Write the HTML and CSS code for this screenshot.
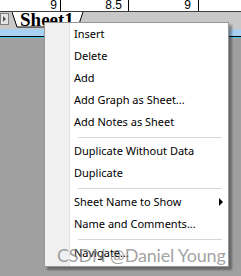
FILE: index.html
```html
<!DOCTYPE html>
<html lang="en">
<head>
<meta charset="UTF-8">
<title>Sheet Menu</title>
<link rel="stylesheet" href="styles.css">
</head>
<body>

<div class="sheet">
  <div class="cells">
    <div class="cell c1">9</div>
    <div class="cell c2">8.5</div>
    <div class="cell c3">9</div>
    <div class="cell c4"></div>
  </div>
  <div class="tabbar">
    <div class="scroll-btn">
      <svg width="5" height="6" viewBox="0 0 5 6"><path d="M1 0 L4 3 L1 6 Z" fill="#555"/></svg>
    </div>
    <div class="tab">
      <svg class="tab-shape" width="76" height="16" viewBox="0 0 76 16">
        <path d="M0 0 L5 15 L66 15 L71 0" fill="#fff" stroke="#000" stroke-width="1"/>
      </svg>
      <span class="tab-label">Sheet1</span>
    </div>
  </div>
  <div class="hscroll"></div>
  <div class="workspace"></div>
</div>

<div class="menu">
  <div class="item">Insert</div>
  <div class="item">Delete</div>
  <div class="item">Add</div>
  <div class="item">Add Graph as Sheet...</div>
  <div class="item">Add Notes as Sheet</div>
  <div class="sep"></div>
  <div class="item">Duplicate Without Data</div>
  <div class="item">Duplicate</div>
  <div class="sep"></div>
  <div class="item sub">Sheet Name to Show <span class="arrow"></span></div>
  <div class="item">Name and Comments...</div>
  <div class="sep"></div>
  <div class="item">Navigate...</div>
</div>

<div class="watermark">CSDN @Daniel Young</div>

</body>
</html>
```

FILE: styles.css
```css
body {
  margin: 0;
  width: 241px;
  height: 276px;
  overflow: hidden;
  background: #a0a0a0;
  font-family: "Noto Sans", "Open Sans", sans-serif;
  position: relative;
}

.sheet {
  display: flex;
  flex-direction: column;
}

.cells {
  display: flex;
  height: 11px;
  background: #fff;
  border-bottom: 1px solid #404040;
  font-family: "Liberation Sans", Arial, sans-serif;
  font-size: 12px;
  color: #000;
}

.cell {
  display: flex;
  align-items: flex-end;
  justify-content: flex-end;
  line-height: 11px;
  border-right: 1px solid #000;
  padding-right: 3px;
}

.c1 { width: 57px; }
.c2 { width: 61px; padding-right: 6px; }
.c3 { width: 62px; padding-right: 7px; }
.c4 { flex: 1; border-right: none; }

.tabbar {
  display: flex;
  height: 16px;
  background: #c8c8c8;
  position: relative;
}

.scroll-btn {
  width: 9px;
  height: 12px;
  margin-top: 1px;
  background: #e4e4e4;
  border: 1px solid #808080;
  box-sizing: border-box;
  display: flex;
  align-items: center;
  justify-content: center;
}

.tab {
  position: relative;
  margin-left: 3px;
  width: 76px;
  height: 16px;
}

.tab-shape {
  position: absolute;
  top: 0;
  left: 0;
}

.tab-label {
  position: absolute;
  left: 8px;
  top: -3px;
  font-family: "Liberation Serif", "Times New Roman", serif;
  font-size: 19px;
  font-weight: bold;
  color: #000;
}

.hscroll {
  height: 7px;
  background: #a8d0f0;
  border-top: 1px solid #c8c8c8;
  border-bottom: 1px solid #000;
  box-shadow: 0 1px 0 #4cc4e8;
}

.workspace {
  flex: 1;
}

.menu {
  position: absolute;
  left: 44px;
  top: 22px;
  width: 183px;
  padding: 1px 0;
  background: linear-gradient(to right, #f0f0f0 0, #f0f0f0 24px, #e2e3e3 24px, #e2e3e3 25px, #fff 25px);
  border: 1px solid #979797;
  box-shadow: 3px 3px 2px rgba(0, 0, 0, 0.35);
  font-size: 11px;
  color: #000;
}

.item {
  height: 22px;
  line-height: 19px;
  padding-left: 29px;
  position: relative;
  white-space: nowrap;
}

.sep {
  height: 7px;
  margin-left: 33px;
  margin-right: 6px;
  background: linear-gradient(#d7d7d7, #d7d7d7) no-repeat 0 3px / 100% 1px;
}

.arrow {
  position: absolute;
  right: 5px;
  top: 6px;
  width: 0;
  height: 0;
  border-top: 4px solid transparent;
  border-bottom: 4px solid transparent;
  border-left: 4px solid #000;
}

.watermark {
  position: absolute;
  left: 57px;
  top: 244px;
  font-family: Lato, "Noto Sans", sans-serif;
  font-size: 18px;
  letter-spacing: -0.2px;
  color: rgba(120, 120, 120, 0.7);
  white-space: nowrap;
}
```
